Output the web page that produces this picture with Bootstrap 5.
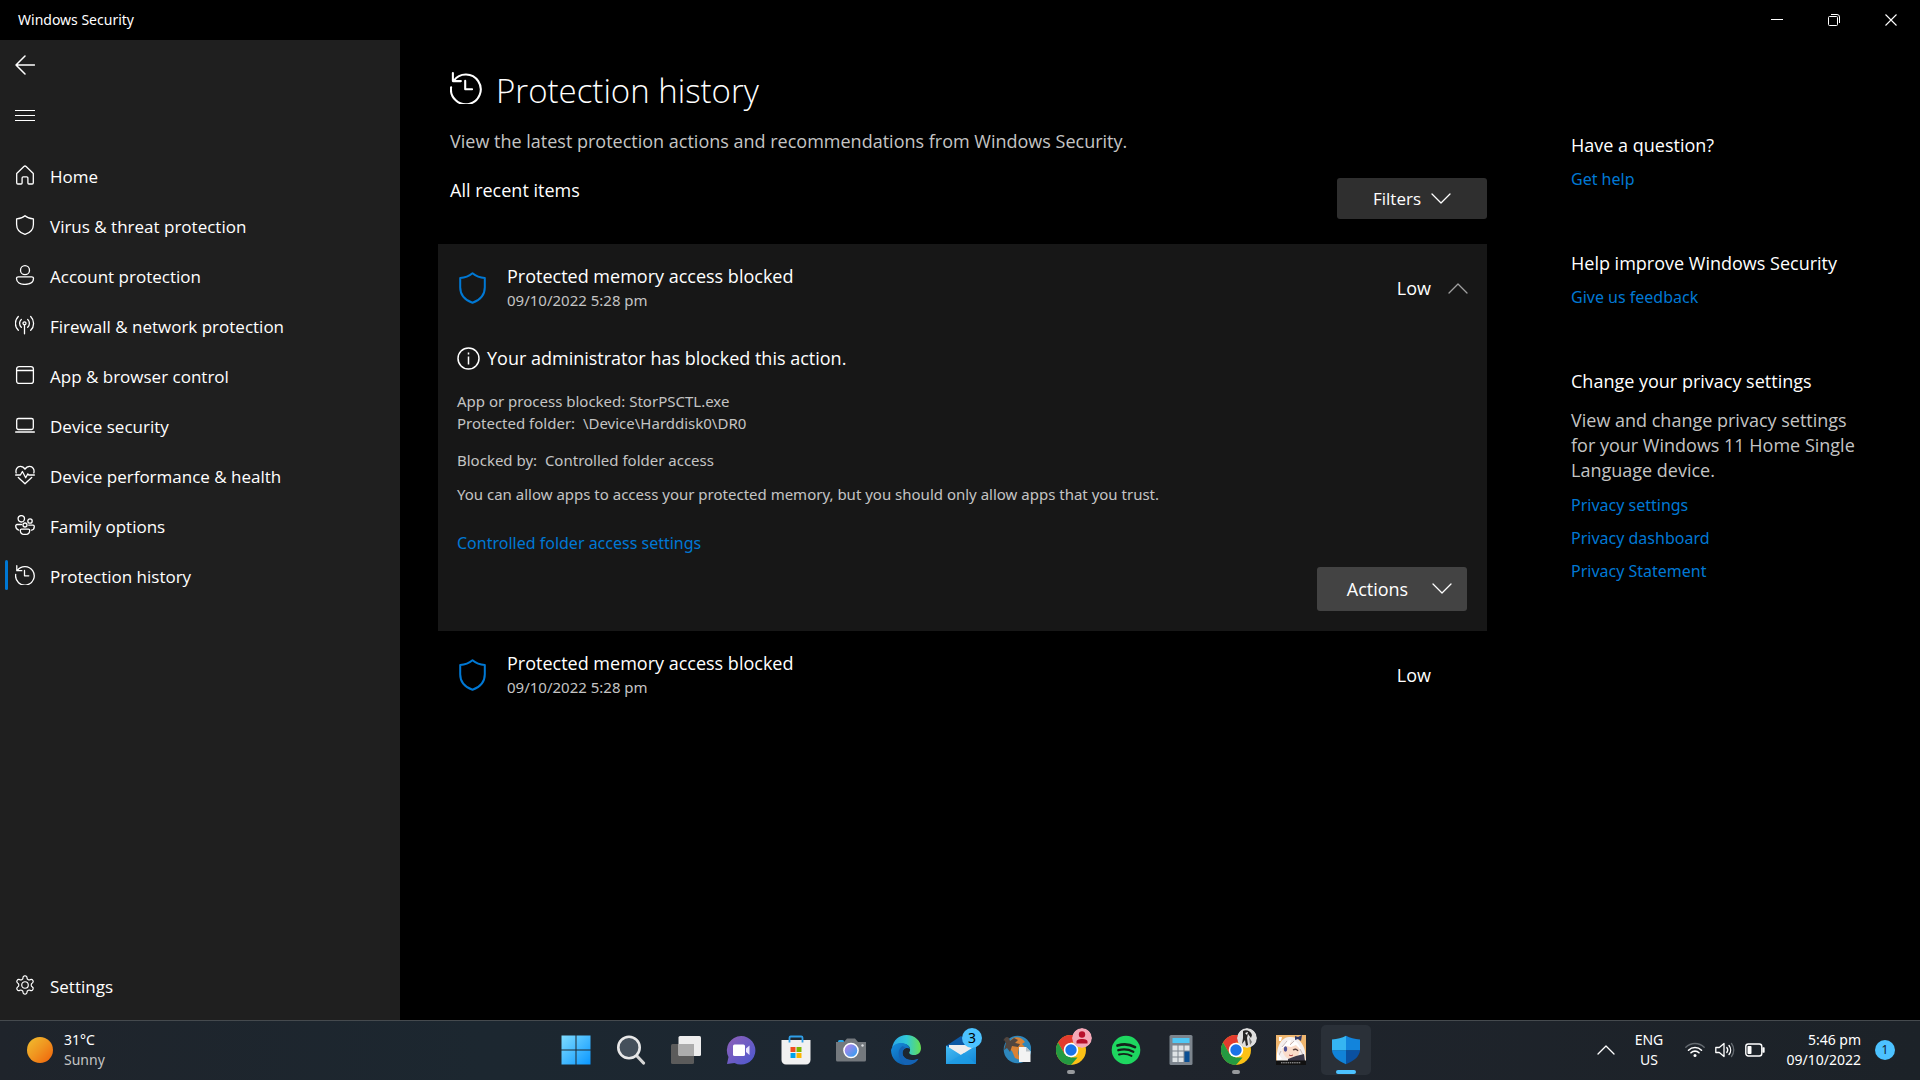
<!DOCTYPE html>
<html lang="en" data-bs-theme="dark">
<head>
<meta charset="utf-8">
<meta name="viewport" content="width=device-width, initial-scale=1">
<title>Windows Security</title>
<link href="https://cdn.jsdelivr.net/npm/bootstrap@5.3.0/dist/css/bootstrap.min.css" rel="stylesheet">
<style>
  body { background:#000; color:#fff; font-family:"Open Sans","Noto Sans",sans-serif; font-size:18px; line-height:24px; }
  svg { display:block; flex-shrink:0; }
  .ln { fill:none; stroke:currentColor; stroke-width:1.3; stroke-linecap:round; stroke-linejoin:round; }
  a { color:#0078d4; text-decoration:none; }
  .plain-btn { background:none; border:0; color:#fff; padding:0; display:flex; align-items:center; }
  .titlebar { height:40px; font-family:"Noto Sans","Open Sans",sans-serif; font-size:14px; padding:0 1px 0 18px; }
  .titlebar .plain-btn { width:57px; height:40px; justify-content:center; }
  .sidebar { width:400px; background:#1f1f1f; padding-bottom:10px; font-size:17px; }
  .sidebar .plain-btn { height:50px; padding-left:15px; width:50px; }
  .sidebar .nav-link { height:50px; padding:0 0 0 15px; gap:15px; color:#fff; display:flex; align-items:center; border-radius:0; }
  .sidebar .nav-link span { padding-top:4px; }
  .sidebar .nav-link.active { background:none; position:relative; }
  .sidebar .nav-link.active::before { content:""; position:absolute; left:5px; top:10px; width:3px; height:30px; border-radius:2px; background:#0078d4; }
  .content { padding:29px 0 0 38px; }
  .inset { padding-left:12px; }
  .page-title { font-size:33px; line-height:44px; font-weight:300; margin:0 0 16px; gap:14px; }
  .page-title svg { margin-top:3px; }
  .soft { color:#c4c4c4; }
  .tools { margin:25px 0; }
  .menu-btn { width:150px; height:41px; background:#2f2f2f; border:0; border-radius:3px; color:#fff; display:flex; align-items:center; justify-content:center; gap:10px; padding:0; font-size:17px; line-height:24px; }
  .menu-btn.action { height:44px; background:#434343; gap:24px; padding-left:15px; font-size:18px; }
  .entry { border:0; border-radius:0; background:transparent; color:#fff; }
  .entry.open { background:#171717; }
  .entry-head { padding:20px 19px; background:none; border:0; color:#fff; text-align:left; width:100%; display:flex; align-items:center; }
  .entry-head .caret-slot { width:37px; padding-left:17px; flex-shrink:0; }
  .shield-slot { width:50px; padding-left:2px; flex-shrink:0; }
  .stamp { font-family:"Noto Sans","Open Sans",sans-serif; font-size:15px; line-height:24px; color:#c4c4c4; }
  .detail { font-family:"Noto Sans","Open Sans",sans-serif; font-size:15px; line-height:22px; color:#c4c4c4; }
  .entry-body { padding:14px 20px 20px 19px; }
  .facts { margin:20px 0 26px; }
  .facts p { margin:0; }
  .link-sm { font-family:"Noto Sans","Open Sans",sans-serif; font-size:16px; line-height:24px; }
  .helpcol { width:349px; margin-left:84px; padding-top:93px; flex-shrink:0; padding-right:60px; }
  .helpcol h2 { font-size:18px; line-height:24px; font-weight:400; margin:0 0 10px; }
  .helpcol section { margin-bottom:60px; }
  .helpcol p { line-height:25px; margin:15px 0 6px; }
  .helpcol li { height:33px; }
  .helpcol li a { line-height:33px; }
  .taskbar { height:60px; padding-bottom:2px; border-top:1px solid #454a4e; background:linear-gradient(90deg,#1f242b 0%,#1c2730 25%,#1d2731 45%,#1f242c 60%,#1c2228 100%); font-family:"Noto Sans","Open Sans",sans-serif; font-size:14px; line-height:20px; }
  .dock { gap:5px; }
  .dock .plain-btn { width:50px; height:50px; justify-content:center; position:relative; border-radius:5px; }
  .dock .current { background:#2a3038; }
  .dock .running::after { content:""; position:absolute; bottom:1px; left:21px; width:8px; height:4px; border-radius:2px; background:#979a9d; }
  .dock .current::after { content:""; position:absolute; bottom:1px; left:15px; width:20px; height:4px; border-radius:2px; background:#4cc2ff; }
  .count { position:absolute; right:4px; top:3px; width:20px; height:20px; border-radius:50%; background:#4cc2ff; color:#000; text-align:center; line-height:20px; font-size:14px; }
  .tally { width:20px; height:20px; border-radius:50%; background:#4cc2ff; color:#10202b; text-align:center; font-size:12px; line-height:20px; }
</style>
<script src="https://cdn.jsdelivr.net/npm/bootstrap@5.3.0/dist/js/bootstrap.bundle.min.js"></script>
</head>
<body class="d-flex flex-column min-vh-100">

<header class="titlebar d-flex align-items-center">
  <span class="me-auto">Windows Security</span>
  <button class="plain-btn" aria-label="Minimize"><svg width="12" height="12" viewBox="0 0 12 12"><path d="M0 5.500h12" stroke="#fff"/></svg></button>
  <button class="plain-btn" aria-label="Restore"><svg width="12" height="12" viewBox="0 0 12 12" fill="none" stroke="#fff"><rect x=".5" y="2.500" width="9" height="9" rx="1"/><path d="M3 .5h6a2.500 2.500 0 0 1 2.500 2.500v6"/></svg></button>
  <button class="plain-btn" aria-label="Close"><svg width="12" height="12" viewBox="0 0 12 12"><path d="M.5.5l11 11M11.500.5l-11 11" stroke="#fff" stroke-width="1.100"/></svg></button>
</header>

<div class="d-flex flex-grow-1">
  <nav class="sidebar d-flex flex-column flex-shrink-0" aria-label="Sections">
    <button class="plain-btn" aria-label="Back"><svg class="ln" width="20" height="20" viewBox="0 0 20 20"><path d="M19.500 10H1M10 1L1 10l9 9" stroke-width="1.500"/></svg></button>
    <button class="plain-btn" aria-label="Open navigation"><svg width="20" height="20" viewBox="0 0 20 20" stroke="#fff"><path d="M0 5.500h20M0 10.500h20M0 15.500h20"/></svg></button>
    <div class="nav flex-column flex-nowrap flex-grow-1" style="padding-top:10px">
      <a class="nav-link" href="#"><svg class="ln" width="20" height="20" viewBox="0 0 20 20"><path d="M1.700 8.500L8.900 1.500a1.600 1.600 0 0 1 2.200 0l7.200 7V17.800a1.200 1.200 0 0 1-1.200 1.200h-3.200a1 1 0 0 1-1-1v-5a1.200 1.200 0 0 0-1.200-1.200H8.300A1.200 1.200 0 0 0 7.100 13v5a1 1 0 0 1-1 1H2.900a1.200 1.200 0 0 1-1.200-1.200z"/></svg><span>Home</span></a>
      <a class="nav-link" href="#"><svg class="ln" width="20" height="20" viewBox="0 0 20 20"><path d="M10 .8c2 1.900 5 2.900 8.400 3v5.700c0 5-3.600 8.500-8.400 9.900-4.800-1.400-8.400-4.900-8.400-9.900V3.800C5 3.700 8 2.700 10 .8z"/></svg><span>Virus &amp; threat protection</span></a>
      <a class="nav-link" href="#"><svg class="ln" width="20" height="20" viewBox="0 0 20 20"><circle cx="10" cy="5.200" r="4.500"/><path d="M3.300 11.800h13.400a1.800 1.800 0 0 1 1.800 1.800c0 3.800-3.600 5.800-8.500 5.800s-8.500-2-8.500-5.800a1.800 1.800 0 0 1 1.800-1.800z"/></svg><span>Account protection</span></a>
      <a class="nav-link" href="#"><svg class="ln" width="20" height="20" viewBox="0 0 20 20"><circle cx="9.500" cy="8.300" r="1.500"/><path d="M9.500 10v8.800M6.300 12.200a5.300 5.300 0 0 1 0-7.800M12.700 12.200a5.300 5.300 0 0 0 0-7.800M3.300 15.300a9.700 9.700 0 0 1 0-13.800M15.700 15.300a9.700 9.700 0 0 0 0-13.800"/></svg><span>Firewall &amp; network protection</span></a>
      <a class="nav-link" href="#"><svg class="ln" width="20" height="20" viewBox="0 0 20 20"><rect x="1.600" y="1.600" width="16.800" height="16.800" rx="2.500"/><path d="M1.600 5.500h16.800"/></svg><span>App &amp; browser control</span></a>
      <a class="nav-link" href="#"><svg class="ln" width="20" height="20" viewBox="0 0 20 20"><rect x="1.700" y="3.500" width="16.600" height="11" rx="1.800"/><path d="M.6 17h18.800"/></svg><span>Device security</span></a>
      <a class="nav-link" href="#"><svg class="ln" width="20" height="20" viewBox="0 0 20 20"><path d="M1.200 8C.2 4.500 2.300 1.400 5.300 1.400 7.300 1.400 9 2.500 10 4.300 11 2.500 12.700 1.400 14.700 1.400c3 0 5.100 3.100 4.100 6.600M.6 10h4.800l2-3.500 3.300 6.200 2.100-3.800 1 1.100h5.600M3.300 12.500L10 18.800l6.700-6.300"/></svg><span>Device performance &amp; health</span></a>
      <a class="nav-link" href="#"><svg class="ln" width="20" height="20" viewBox="0 0 20 20"><circle cx="6.300" cy="3.800" r="3.200"/><circle cx="15" cy="6" r="2.200"/><circle cx="10" cy="10" r="2"/><path d="M6.500 9.500H2A1.300 1.300 0 0 0 .7 10.800c0 2.200 1 3.700 3 4.300M13.800 10.200H18a1.300 1.300 0 0 1 1.300 1.300c0 2-1 3.300-2.800 3.600M6.500 14.200h7a1.200 1.200 0 0 1 1.200 1.200c0 2.600-2 4-4.700 4s-4.700-1.400-4.700-4a1.200 1.200 0 0 1 1.200-1.200z"/></svg><span>Family options</span></a>
      <a class="nav-link active" href="#" aria-current="page"><svg class="ln" width="20" height="20" viewBox="0 0 20 20"><path d="M1.800.7v5h5M2.300 5.500A9.300 9.300 0 1 1 .7 9.500M9.500 5.500v5.300h4.300"/></svg><span>Protection history</span></a>
      <a class="nav-link mt-auto" href="#"><svg class="ln" width="20" height="20" viewBox="1 1 22 22"><path d="M12.220 2h-.44a2 2 0 0 0-2 2v.18a2 2 0 0 1-1 1.730l-.43.25a2 2 0 0 1-2 0l-.15-.08a2 2 0 0 0-2.730.73l-.22.38a2 2 0 0 0 .73 2.730l.15.1a2 2 0 0 1 1 1.720v.51a2 2 0 0 1-1 1.740l-.15.09a2 2 0 0 0-.73 2.730l.22.38a2 2 0 0 0 2.730.73l.15-.08a2 2 0 0 1 2 0l.43.25a2 2 0 0 1 1 1.730V20a2 2 0 0 0 2 2h.44a2 2 0 0 0 2-2v-.18a2 2 0 0 1 1-1.730l.43-.25a2 2 0 0 1 2 0l.15.08a2 2 0 0 0 2.730-.73l.22-.39a2 2 0 0 0-.73-2.730l-.15-.08a2 2 0 0 1-1-1.740v-.5a2 2 0 0 1 1-1.740l.15-.09a2 2 0 0 0 .73-2.730l-.22-.38a2 2 0 0 0-2.730-.73l-.15.08a2 2 0 0 1-2 0l-.43-.25a2 2 0 0 1-1-1.730V4a2 2 0 0 0-2-2z"/><circle cx="12" cy="12" r="3.600"/></svg><span>Settings</span></a>
    </div>
  </nav>

  <main class="content flex-grow-1">
    <div class="inset">
      <h1 class="page-title d-flex align-items-start"><svg class="ln" width="32" height="32" viewBox="0 0 20 20"><path d="M1.800.7v5h5M2.300 5.500A9.300 9.300 0 1 1 .7 9.500M9.500 5.500v5.300h4.300"/></svg>Protection history</h1>
      <p class="soft mb-0">View the latest protection actions and recommendations from Windows Security.</p>
    </div>
    <div class="tools inset d-flex justify-content-between align-items-start">
      <span>All recent items</span>
      <button class="menu-btn">Filters <svg class="ln" width="20" height="12" viewBox="0 0 20 12"><path d="M1 1l9 9 9-9"/></svg></button>
    </div>

    <article class="card entry open">
      <button class="entry-head" aria-expanded="true">
        <span class="shield-slot"><svg width="27" height="32" viewBox="0 0 27 32" fill="none" stroke="#0078d4" stroke-width="2" stroke-linejoin="round"><path d="M13.500 1.200c3.500 2.900 7.500 4.400 12.300 4.700v9.300c0 7.500-4.700 12.900-12.300 15.600C5.900 28.100 1.200 22.700 1.200 15.200V5.900C6 5.600 10 4.100 13.500 1.200z"/></svg></span>
        <span class="flex-grow-1"><span class="d-block">Protected memory access blocked</span><span class="d-block stamp">09/10/2022 5:28 pm</span></span>
        <span>Low</span>
        <span class="caret-slot"><svg class="ln" width="20" height="12" viewBox="0 0 20 12" style="color:#a0a0a0"><path d="M1 11l9-9 9 9"/></svg></span>
      </button>
      <div class="entry-body">
        <div class="d-flex align-items-center" style="gap:7px"><svg width="23" height="23" viewBox="0 0 23 23" fill="none" stroke="#fff" stroke-width="1.500"><circle cx="11.500" cy="11.500" r="10.500"/><path d="M11.500 9.500v8M11.500 5.500v2"/></svg>Your administrator has blocked this action.</div>
        <div class="facts detail">
          <p>App or process blocked: StorPSCTL.exe</p>
          <p>Protected folder:&nbsp; \Device\Harddisk0\DR0</p>
          <p style="margin-top:15px">Blocked by:&nbsp; Controlled folder access</p>
          <p style="margin-top:12px">You can allow apps to access your protected memory, but you should only allow apps that you trust.</p>
        </div>
        <a class="link-sm d-block" href="#">Controlled folder access settings</a>
        <div class="d-flex justify-content-end" style="margin-top:12px">
          <button class="menu-btn action">Actions <svg class="ln" width="20" height="12" viewBox="0 0 20 12"><path d="M1 1l9 9 9-9"/></svg></button>
        </div>
      </div>
    </article>

    <article class="card entry">
      <button class="entry-head" aria-expanded="false">
        <span class="shield-slot"><svg width="27" height="32" viewBox="0 0 27 32" fill="none" stroke="#0078d4" stroke-width="2" stroke-linejoin="round"><path d="M13.500 1.200c3.500 2.900 7.500 4.400 12.300 4.700v9.300c0 7.500-4.700 12.900-12.300 15.600C5.900 28.100 1.200 22.700 1.200 15.200V5.900C6 5.600 10 4.100 13.500 1.200z"/></svg></span>
        <span class="flex-grow-1"><span class="d-block">Protected memory access blocked</span><span class="d-block stamp">09/10/2022 5:28 pm</span></span>
        <span>Low</span>
        <span class="caret-slot"></span>
      </button>
    </article>
  </main>

  <aside class="helpcol">
    <section><h2>Have a question?</h2><a class="link-sm d-block" href="#">Get help</a></section>
    <section><h2>Help improve Windows Security</h2><a class="link-sm d-block" href="#">Give us feedback</a></section>
    <section><h2>Change your privacy settings</h2>
      <p class="soft">View and change privacy settings for your Windows 11 Home Single Language device.</p>
      <ul class="list-unstyled link-sm mb-0"><li><a href="#">Privacy settings</a></li><li><a href="#">Privacy dashboard</a></li><li><a href="#">Privacy Statement</a></li></ul>
    </section>
  </aside>
</div>

<svg width="0" height="0" class="position-absolute" aria-hidden="true">
  <defs>
    <linearGradient id="gWin" x1="0" y1="0" x2="1" y2="1"><stop offset="0" stop-color="#7fdcff"/><stop offset="1" stop-color="#0a97ff"/></linearGradient>
    <linearGradient id="gSun" x1="0" y1="0" x2="1" y2="1"><stop offset="0" stop-color="#f0c030"/><stop offset=".5" stop-color="#f0941f"/><stop offset="1" stop-color="#f0600a"/></linearGradient>
    <linearGradient id="gChat" x1="0" y1="0" x2="1" y2="1"><stop offset="0" stop-color="#9060b8"/><stop offset="1" stop-color="#4a58d0"/></linearGradient>
    <linearGradient id="gEdgeTop" x1="0" y1="0" x2="1" y2="0"><stop offset="0" stop-color="#2aa6e8"/><stop offset=".5" stop-color="#30c8d8"/><stop offset="1" stop-color="#66e050"/></linearGradient>
    <linearGradient id="gEdgeLow" x1="0" y1="0" x2="1" y2="1"><stop offset="0" stop-color="#1590e0"/><stop offset="1" stop-color="#0a4a98"/></linearGradient>
    <linearGradient id="gMail" x1="0" y1="0" x2="1" y2="1"><stop offset="0" stop-color="#45bdf5"/><stop offset="1" stop-color="#1085d5"/></linearGradient>
    <linearGradient id="gLens" x1="0" y1="0" x2="1" y2="1"><stop offset="0" stop-color="#c080e8"/><stop offset="1" stop-color="#28a0f0"/></linearGradient>
    <symbol id="chromeLogo" viewBox="0 0 30 30"><circle cx="15" cy="15" r="15" fill="#fbc116"/><path d="M15 15L8.500 18.700 2 7.500A15 15 0 0 1 28 7.500H15z" fill="#e33b2e"/><path d="M2 7.500l6.500 11.200L15 22.500h6.500L15 30A15 15 0 0 1 2 7.500z" fill="#249a41"/><circle cx="15" cy="15" r="7.300" fill="#fff"/><circle cx="15" cy="15" r="5.700" fill="#1a73e8"/></symbol>
  </defs>
</svg>

<footer class="taskbar d-flex align-items-center">
  <div class="d-flex align-items-center" style="flex:1 1 0;padding-left:27px;gap:11px">
    <svg width="26" height="26" viewBox="0 0 26 26"><circle cx="13" cy="13" r="13" fill="url(#gSun)"/></svg>
    <div><div>31°C</div><div class="soft">Sunny</div></div>
  </div>
  <div class="dock d-flex">
    <button class="plain-btn" aria-label="Start"><svg width="30" height="30" viewBox="0 0 30 30" fill="url(#gWin)"><path d="M.5.5h14v14H.5zM15.500.5h14v14h-14zM.5 15.500h14v14H.5zM15.500 15.500h14v14h-14z"/></svg></button>
    <button class="plain-btn" aria-label="Search"><svg width="30" height="30" viewBox="0 0 30 30"><path d="M20 20l7.500 8" stroke="#d5d5d5" stroke-width="3.200" stroke-linecap="round"/><circle cx="13" cy="12.500" r="10.700" fill="#45505b" stroke="#e8e8e8" stroke-width="2.600"/></svg></button>
    <button class="plain-btn" aria-label="Task view"><svg width="30" height="30" viewBox="0 0 30 30"><rect x="0" y="9" width="23" height="20" rx="1.500" fill="#5b5b5b"/><rect x="7.500" y="1" width="22.500" height="20" rx="1.500" fill="#ededed"/><path d="M7.500 9H23v12H9a1.500 1.500 0 0 1-1.500-1.500z" fill="#acacac"/></svg></button>
    <button class="plain-btn" aria-label="Chat"><svg width="30" height="30" viewBox="0 0 30 30"><path d="M15 1a14.300 14.300 0 1 1-6.500 27L1 29l1.500-7A14.300 14.300 0 0 1 15 1z" fill="url(#gChat)"/><rect x="7" y="9.500" width="12" height="11.500" rx="1.500" fill="#fff"/><path d="M20 13.500l3.500-3v9.500l-3.500-3z" fill="#e8e4ff"/></svg></button>
    <button class="plain-btn" aria-label="Microsoft Store"><svg width="30" height="30" viewBox="0 0 30 30"><path d="M8.500 6V2.800A1.300 1.300 0 0 1 9.800 1.500h10.400a1.300 1.300 0 0 1 1.300 1.300V6" fill="none" stroke="#2f9fe8" stroke-width="1.800"/><path d="M.5 5h29v20a4.500 4.500 0 0 1-4.500 4.500H5A4.500 4.500 0 0 1 .5 25z" fill="#f1f1f1"/><path d="M9.500 12h5v5h-5z" fill="#f04e1f"/><path d="M15.500 12h5v5h-5z" fill="#7db700"/><path d="M9.500 18h5v5h-5z" fill="#00a2ea"/><path d="M15.500 18h5v5h-5z" fill="#fcb500"/><path d="M8.500 5v2.500M21.500 5v2.500" stroke="#2f9fe8" stroke-width="1.800"/></svg></button>
    <button class="plain-btn" aria-label="Camera"><svg width="30" height="30" viewBox="0 0 30 30"><rect x="2" y="5" width="6" height="4" rx="1.500" fill="#28a8ea"/><path d="M0 7h8l3-3.500h8L22 7h8v18a1.500 1.500 0 0 1-1.500 1.500h-27A1.500 1.500 0 0 1 0 25z" fill="#74797e"/><circle cx="15" cy="15.500" r="7.800" fill="#fff"/><circle cx="15" cy="15.500" r="6.300" fill="url(#gLens)"/><circle cx="26.500" cy="10.500" r="1.200" fill="#d8dcdf"/></svg></button>
    <button class="plain-btn" aria-label="Edge"><svg width="30" height="30" viewBox="0 0 30 30"><path d="M1 13C2.500 5 8 0 15.500 0 24 0 30 6 30 13c0 4.500-3 7-7 7-3.500 0-5.500-1.500-4.500-3 1.500-2.500.5-7-5-8C8 8 3 10 1 13z" fill="url(#gEdgeTop)"/><path d="M0 15C1.500 10 6 7.500 11 8c4.500.4 7.500 3 8 6-3-2.500-7.500-.5-7.500 4 0 5.500 6.500 9.500 15.500 6C24.500 28 20 30 15 30 6.500 30 0 23.500 0 15z" fill="url(#gEdgeLow)"/><path d="M11.500 11c-6 4-5 13 2.500 18.900C22 30.400 26 26.500 27.500 23.700 18 27 11.500 23 11.500 18c0-2.500 1.500-4.300 3.500-5z" fill="#1463b4"/></svg></button>
    <button class="plain-btn" aria-label="Mail"><svg width="30" height="30" viewBox="0 0 30 30"><path d="M0 11L15 1l15 10v6H0z" fill="#0c59a4"/><path d="M3 10h24v7l-12 5L3 17z" fill="#ededed"/><path d="M0 10.500l15 9.500 15-9.500V29H0z" fill="url(#gMail)"/><path d="M0 29l18-11 12 11z" fill="#1d9be4" opacity=".7"/></svg><span class="count">3</span></button>
    <button class="plain-btn" aria-label="Document browser"><svg width="30" height="30" viewBox="0 0 30 30"><circle cx="16.500" cy="14.500" r="13.800" fill="#2d87bd"/><path d="M12 3c5-2 9 0 12 4l-3 2 3 3-6 1-1 5 2 7-5-2-3-7-4-3 1-6z" fill="#d98235"/><path d="M2 6c2-4 4-5 6-3l1 3 4-3 4 2-3 3 5 1-2 3-6-1-2 6-3-4-3 2 2-7-2-3z" fill="#51453f"/><path d="M18 12h7l4.500 4.500V27H18z" fill="#f3f3f3"/><path d="M25 12v4.500h4.500z" fill="#b9c2c8"/></svg></button>
    <button class="plain-btn running" aria-label="Chrome"><svg width="30" height="30"><use href="#chromeLogo"/></svg><svg class="count" style="background:none" viewBox="0 0 20 20"><circle cx="10" cy="10" r="10" fill="#f4a8b8"/><circle cx="10" cy="6.500" r="3.200" fill="#b8102c"/><path d="M4.500 15.500v-1.700C4.500 11.800 7 11 10 11s5.500.8 5.500 2.800v1.700z" fill="#b8102c"/></svg></button>
    <button class="plain-btn" aria-label="Spotify"><svg width="30" height="30" viewBox="0 0 30 30"><circle cx="15" cy="15" r="14.300" fill="#1ed760"/><g fill="none" stroke="#14221a" stroke-linecap="round"><path d="M6.500 10.500c6-1.800 12.500-1.200 17.500 1.600" stroke-width="2.700"/><path d="M7.300 15.200c5.200-1.500 10.500-.9 15 1.500" stroke-width="2.300"/><path d="M8 19.500c4.500-1.200 8.800-.7 12.500 1.400" stroke-width="1.900"/></g></svg></button>
    <button class="plain-btn" aria-label="Calculator"><svg width="30" height="30" viewBox="0 0 30 30"><rect x="3.500" y="0" width="23" height="30" rx="1.500" fill="#7d858e"/><rect x="6.500" y="3" width="17" height="5" fill="#4fc8f5"/><path d="M6.500 10.500h5v5h-5zM12.500 10.500h5v5h-5zM18.500 10.500h5v5h-5zM6.500 16.500h5v5h-5zM12.500 16.500h5v5h-5zM6.500 22.500h5V27h-5zM12.500 22.500h5V27h-5z" fill="#dfe3e6"/><path d="M18.500 16.500h5V27h-5z" fill="#0b4f94"/></svg></button>
    <button class="plain-btn running" aria-label="Chrome, second profile"><svg width="30" height="30"><use href="#chromeLogo"/></svg><svg class="count" style="background:none" viewBox="0 0 20 20"><circle cx="10" cy="10" r="10" fill="#dedede"/><path d="M6 3c3-2 8 0 9 4l-1 3-3-4-1 4 1 7-2 1-1-6-3 4 1-6z" fill="#242424"/><path d="M12 9l3 5-2 3z" fill="#777"/><path d="M8 5l3-1-1 3z" fill="#fff"/></svg></button>
    <button class="plain-btn" aria-label="Game"><svg width="30" height="30" viewBox="0 0 30 30"><path d="M0 0h30v30H0z" fill="#efb66f"/><path d="M1 27C0 15 3 3 13 2c8-1 14 5 16 14l1 10z" fill="#f4efee"/><path d="M19 1l3 1 4-2-1 6-3-2-3 1z" fill="#303968"/><path d="M7 11c3-4 12-5 16 0 2 6-1 12-7 13S5 18 7 11z" fill="#fbdcc9"/><path d="M5 14c2-6 7-9 10-9l-1 5 5-4c3 2 5 5 6 9l-5-5-5 2-5-1z" fill="#fff"/><path d="M6 12l5-6M14 10l4-4M24 14l3 6M5 16l-3 6" stroke="#b9a8a8" stroke-width=".8"/><ellipse cx="9.500" cy="14" rx="1.700" ry="2.700" fill="#4e5296"/><path d="M17 15q3-2 5 1" fill="none" stroke="#59403d" stroke-width="1.300"/><path d="M13 20q2 1.500 4 0" fill="none" stroke="#b1484a"/><path d="M3 2h3l-1 4H3zM1 17l5 7-5 2z" fill="#fff"/><path d="M12 24l8-3 8-2 1 7H12z" fill="#3b3848"/><path d="M0 25.500h30V30H0z" fill="#111"/><path d="M5 27.800h20" stroke="#b5b5b5" stroke-dasharray="1.500 .7"/></svg></button>
    <button class="plain-btn current" aria-label="Windows Security"><svg width="30" height="30" viewBox="0 0 30 30"><path d="M15 .8v14.700H1V4.500C6.500 4.300 11 3 15 .8z" fill="#35b5f2"/><path d="M15 .8c4 2.200 8.500 3.500 14 3.700v11H15z" fill="#1284dc"/><path d="M1 15.300h14v14C8 26.500 1.500 22 1 15.300z" fill="#1183d8"/><path d="M29 15.300H15v14c7-2.800 13.500-7.300 14-14z" fill="#0a50a0"/></svg></button>
  </div>
  <div class="d-flex align-items-center justify-content-end" style="flex:1 1 0;padding-right:25px">
    <svg class="ln" width="18" height="10" viewBox="0 0 18 10"><path d="M1 9l8-8 8 8"/></svg>
    <div class="text-center" style="width:68px">ENG<br>US</div>
    <svg class="ln" width="20" height="20" viewBox="0 0 20 20" style="margin-left:2px"><path d="M.8 7.300a13 13 0 0 1 18.400 0" stroke="#646a70"/><path d="M3.500 10.200a9.200 9.200 0 0 1 13 0M6 12.800a5.700 5.700 0 0 1 8 0" stroke-width="1.600"/><circle cx="10" cy="15.500" r="1.500" fill="#fff" stroke="none"/></svg>
    <svg class="ln" width="20" height="20" viewBox="0 0 20 20" style="margin-left:10px"><path d="M.8 7.500h3.500L9 3.500v13l-4.700-4H.8z"/><path d="M11.800 7.500a4 4 0 0 1 0 5M14 5.500a7 7 0 0 1 0 9"/><path d="M16.500 3.500a10.500 10.500 0 0 1 0 13" stroke="#646a70"/></svg>
    <svg class="ln" width="20" height="20" viewBox="0 0 20 20" style="margin-left:10px"><rect x=".8" y="4" width="16" height="12" rx="2.500" stroke-width="1.400"/><rect x="2.500" y="6" width="4" height="8" rx=".8" fill="#fff" stroke="none"/><path d="M18 8v4h1V8z" fill="#fff"/></svg>
    <div class="text-end" style="width:96px">5:46 pm<br>09/10/2022</div>
    <span class="tally" style="margin-left:14px">1</span>
  </div>
</footer>
</body>
</html>
